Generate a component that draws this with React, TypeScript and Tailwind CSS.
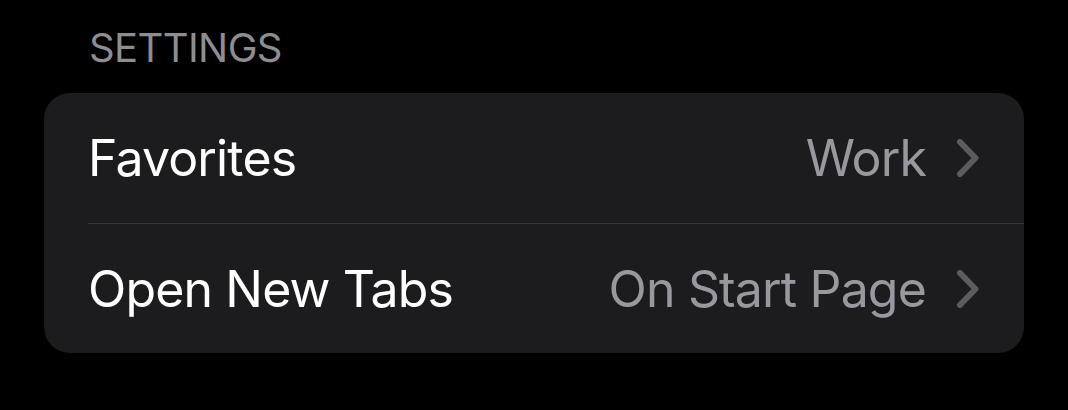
const ROWS = [
  { label: "Favorites", value: "Work" },
  { label: "Open New Tabs", value: "On Start Page" },
];

function Chevron() {
  return (
    <svg width="24" height="38" viewBox="0 0 24 38" fill="none" className="shrink-0">
      <path
        d="M4 3 L19.5 19 L4 35"
        stroke="#5b5b60"
        strokeWidth="6"
        strokeLinecap="round"
        strokeLinejoin="round"
      />
    </svg>
  );
}

export default function App() {
  return (
    <div
      className="h-[410px] w-[1068px] bg-black pt-[28px] pl-[44px] pr-[44px]"
      style={{ fontFamily: "Inter, 'Noto Sans', sans-serif" }}
    >
      <div className="pl-[45px] text-[40px] leading-[40px] tracking-[-0.6px] text-[#8d8d92]">SETTINGS</div>
      <div className="mt-[25px] overflow-hidden rounded-[26px] bg-[#1c1c1e]">
        {ROWS.map((row, i) => (
          <div key={row.label} className="pl-[44px]">
            <div
              className={
                "flex h-[130px] items-center justify-between pr-[44px] " +
                (i > 0 ? "border-t border-[#38383a]" : "")
              }
            >
              <span className="text-[50px] leading-none tracking-[-0.85px] text-white">{row.label}</span>
              <div className="flex items-center gap-[30px]">
                <span className="text-[50px] leading-none tracking-[-0.85px] text-[#98989f]">{row.value}</span>
                <Chevron />
              </div>
            </div>
          </div>
        ))}
      </div>
    </div>
  );
}
